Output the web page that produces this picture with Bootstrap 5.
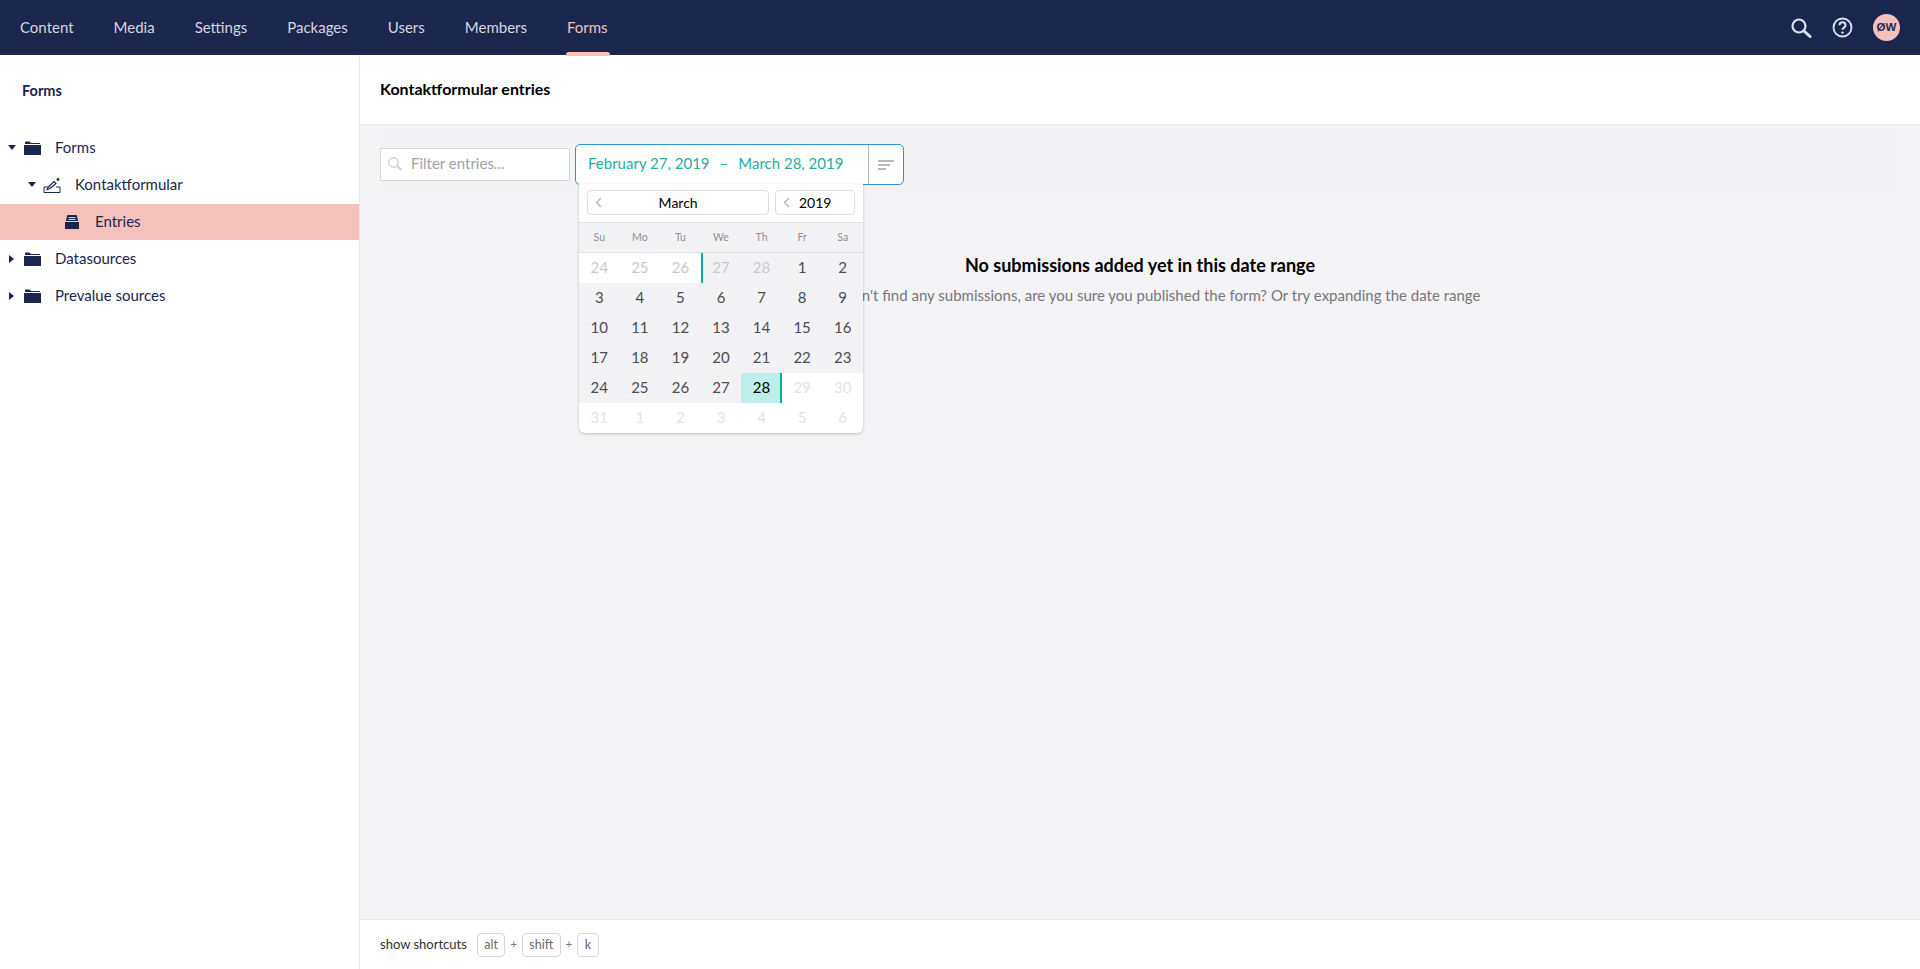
<!DOCTYPE html>
<html lang="en"><head><meta charset="utf-8"><title>Forms</title>
<link href="https://cdn.jsdelivr.net/npm/bootstrap@5.3.0/dist/css/bootstrap.min.css" rel="stylesheet">
<style>
html,body{height:100%}
body{font-family:Lato,"Liberation Sans",sans-serif;font-size:15px;color:#303033;background:#fff;overflow:hidden}
.app-top{height:55px;background:#1b264f}
.sec-link{display:block;position:relative;color:#d8d7d9;font-size:15px;line-height:53px;padding:0 20px;text-decoration:none}
.sec-link.on{color:#f5c1bc}
.sec-link.on::after{content:"";position:absolute;left:19px;right:18px;bottom:-2px;height:4px;background:#f5c1bc;border-radius:3px 3px 0 0}
.top-ico{color:#d8e4f0}
.avatar{width:27px;height:27px;border-radius:50%;background:#f5c1bc;color:#1b264f;font:600 11.5px/27px "Liberation Sans",sans-serif;text-align:center}
.app-main{height:914px}
.side{width:360px;flex:none;border-right:1px solid #e9e9eb;background:#fff}
.side-title{height:55px;padding:26px 0 0 22px;font-weight:700;font-size:14.5px;line-height:20px;color:#1b264f;margin-bottom:0}
.tree-row{height:37px;font-size:15px;color:#1b264f}
.tree-row.first{margin-top:19px}
.tree-row.sel{background:#f5c1bc;height:36px;margin-top:1px;padding-bottom:1px}
.caret-slot{width:14px;flex:none;display:flex;justify-content:center}
.tree-ico{width:18px;flex:none;margin:0 14px 0 4px;display:flex;justify-content:center}
.ind1{padding-left:5px}.ind2{padding-left:25px}.ind3{padding-left:45px}
.work{background:#f4f3f5;min-width:0}
.work-head{height:70px;background:#fff;border-bottom:1px solid #e9e9eb;padding:0 20px;font-size:16px;font-weight:700;color:#000;line-height:67px}
.tools{margin:0 20px;padding:20px 0 0;height:71px;background:#f3f3f5;position:relative}
.filter-box{width:190px;height:33px;margin-top:3px;background:#fff;border:1px solid #d8d7d9;color:#a2a1a6;font-size:15px;padding:0 6px 2px}
.range{width:330px;position:relative;margin-left:5px}
.range-bar{width:329px;height:41px;margin-top:-1px;background:#fff;border:1px solid #2b93d2;border-radius:5px;color:#1fae9f;font-size:15px}
.range-txt{flex:1;padding:0 0 3px 12px}
.range-dash{margin:0 10px}
.range-btn{width:35px;height:39px;border-left:1px solid #bbbabf}
.calendar{position:absolute;left:4px;top:39px;width:284px;background:#fff;border-radius:0 0 6px 6px;box-shadow:0 1px 3px rgba(0,0,0,.22);color:#303033;z-index:5}
.cal-head{height:38px;padding:6px 8px;gap:6px}
.pick{height:25px;border:1px solid #dededf;border-radius:4px;font-size:14px;color:#000;line-height:23px;text-align:center;position:relative}
.pick svg{position:absolute;left:7px;top:6px}
.pick-m{width:183px}.pick-y{width:80px}
.wk{display:grid;grid-template-columns:repeat(7,1fr)}
.wk-names{height:31px;background:#f3f3f5;border-top:1px solid #e0e0e2;border-bottom:1px solid #e0e0e2;font-size:10.5px;color:#8e8d92;text-align:center;line-height:29px}
.dcell{height:30px;text-align:center;line-height:28px;font-size:15px;color:#4c4c52;position:relative}
.dcell.past{color:#c9c9cc}
.dcell.far{color:#e3e3e5}
.dcell.range-in{background:#f3f3f5}
.dcell.end{background:#bdeeea;color:#000}
.dcell.mark-r::after{content:"";position:absolute;right:0;top:0;bottom:0;width:2px;background:#00b0a0}
.dcell.mark-l::after{content:"";position:absolute;left:0;top:0;bottom:0;width:2px;background:#00b0a0}
.empty-wrap{text-align:center;padding-top:57px}
.empty-h{font-size:18px;font-weight:700;color:#000;line-height:24px;margin-bottom:6px}
.empty-p{font-size:15px;color:#77767b;line-height:24px;margin:0}
.foot{height:50px;margin-top:0;background:#fff;border-top:1px solid #e9e9eb;padding-left:20px;font-size:13px;color:#303033}
.kbd-key{border:1px solid #d8d7d9;border-radius:4px;height:24px;line-height:22px;padding:0 6.5px;font-size:12.5px;color:#68676c}
.plus{font-size:11px;color:#77767b;margin:0 5px}
</style></head>
<body>
<nav class="app-top d-flex align-items-center justify-content-between">
  <div class="d-flex">
    <a class="sec-link" href="#">Content</a><a class="sec-link" href="#">Media</a><a class="sec-link" href="#">Settings</a><a class="sec-link" href="#">Packages</a><a class="sec-link" href="#">Users</a><a class="sec-link" href="#">Members</a><a class="sec-link on" href="#">Forms</a>
  </div>
  <div class="d-flex align-items-center top-ico" style="gap:20px;padding-right:20px">
    <svg width="22" height="22" viewBox="0 0 22 22" fill="none" stroke="currentColor"><circle cx="9" cy="9" r="6.5" stroke-width="2.2"/><path d="M14 14l6 5.5" stroke-width="3" stroke-linecap="round"/></svg>
    <svg width="21" height="21" viewBox="0 0 21 21" fill="none" stroke="currentColor"><circle cx="10.5" cy="10.5" r="9" stroke-width="1.9"/><path d="M7.5 8.2c0-4 6-4 6 0 0 2.4-3 2.4-3 4.6" stroke-width="2"/><circle cx="10.5" cy="15.6" r="1.2" fill="currentColor" stroke="none"/></svg>
    <div class="avatar">ØW</div>
  </div>
</nav>
<div class="d-flex app-main">
  <aside class="side">
    <h1 class="side-title">Forms</h1>
    <div class="tree-row first d-flex align-items-center ind1">
      <span class="caret-slot"><svg width="8" height="6"><path d="M0 0h8L4 5z" fill="#1b264f"/></svg></span>
      <span class="tree-ico"><svg width="17" height="14" viewBox="0 0 17 14"><path d="M1 3V1.5C1 1 1.4.5 2 .5h3.5L7 2h9v1z M0 4h17v10H0z" fill="#1b264f"/></svg></span>Forms
    </div>
    <div class="tree-row d-flex align-items-center ind2">
      <span class="caret-slot"><svg width="8" height="6"><path d="M0 0h8L4 5z" fill="#1b264f"/></svg></span>
      <span class="tree-ico"><svg width="18" height="16" viewBox="0 0 18 16" fill="none" stroke="#1b264f"><path d="M1 15.5V10h4M1 15.5h16V10h-4" stroke-width="1"/><path d="M5 10.5l6-6 2 2-6 5-3 1z" stroke-width="1.2"/><circle cx="15" cy="2.5" r="1.4" fill="#1b264f" stroke="none"/></svg></span>Kontaktformular
    </div>
    <div class="tree-row sel d-flex align-items-center ind3">
      <span class="caret-slot"></span>
      <span class="tree-ico"><svg width="14" height="14" viewBox="0 0 14 14"><path d="M0 7h14v7H0z M2 1C2 .5 2.500 0 3 0h8c.5 0 1 .5 1 1l1 5H1z" fill="#1b264f"/><path d="M3.500 2.500h7M3.500 4.500h7" stroke="#f5c1bc"/></svg></span>Entries
    </div>
    <div class="tree-row d-flex align-items-center ind1">
      <span class="caret-slot"><svg width="6" height="8"><path d="M0 0v8l5-4z" fill="#1b264f"/></svg></span>
      <span class="tree-ico"><svg width="17" height="14" viewBox="0 0 17 14"><path d="M1 3V1.5C1 1 1.4.5 2 .5h3.500L7 2h9v1z M0 4h17v10H0z" fill="#1b264f"/></svg></span>Datasources
    </div>
    <div class="tree-row d-flex align-items-center ind1">
      <span class="caret-slot"><svg width="6" height="8"><path d="M0 0v8l5-4z" fill="#1b264f"/></svg></span>
      <span class="tree-ico"><svg width="17" height="14" viewBox="0 0 17 14"><path d="M1 3V1.5C1 1 1.4.5 2 .5h3.500L7 2h9v1z M0 4h17v10H0z" fill="#1b264f"/></svg></span>Prevalue sources
    </div>
  </aside>
  <main class="work flex-grow-1 d-flex flex-column">
    <div class="work-head">Kontaktformular entries</div>
    <div class="tools d-flex align-items-start">
      <div class="filter-box d-flex align-items-center gap-2">
        <svg width="16" height="16" viewBox="0 0 16 16" fill="none" stroke="#d0d0d3"><circle cx="6.500" cy="6.500" r="4.700" stroke-width="1.500"/><path d="M10 10l4.500 4" stroke-width="2"/></svg>
        <span>Filter entries...</span>
      </div>
      <div class="range">
        <div class="range-bar d-flex align-items-center">
          <span class="range-txt">February 27, 2019<span class="range-dash">–</span>March 28, 2019</span>
          <span class="range-btn d-flex align-items-center justify-content-center"><svg width="16" height="10"><path d="M0 1h16M0 5h12M0 9h8" stroke="#a2a1a6" stroke-width="1.500"/></svg></span>
        </div>
        <div class="calendar">
          <div class="cal-head d-flex">
            <div class="pick pick-m"><svg width="7" height="11"><path d="M6 1L1.500 5.500 6 10" fill="none" stroke="#b5b5b8" stroke-width="1.300"/></svg>March</div>
            <div class="pick pick-y"><svg width="7" height="11"><path d="M6 1L1.500 5.500 6 10" fill="none" stroke="#b5b5b8" stroke-width="1.300"/></svg>2019</div>
          </div>
          <div class="wk wk-names"><span>Su</span><span>Mo</span><span>Tu</span><span>We</span><span>Th</span><span>Fr</span><span>Sa</span></div>
          <div class="wk" id="days"></div>
        </div>
      </div>
    </div>
    <div class="empty-wrap flex-grow-1">
      <h2 class="empty-h">No submissions added yet in this date range</h2>
      <p class="empty-p">We couldn't find any submissions, are you sure you published the form? Or try expanding the date range</p>
    </div>
    <footer class="foot d-flex align-items-center">
      <span style="margin-right:10px">show shortcuts</span>
      <span class="kbd-key">alt</span><span class="plus">+</span><span class="kbd-key">shift</span><span class="plus">+</span><span class="kbd-key">k</span>
    </footer>
  </main>
</div>
<script>
const d=[24,25,26,27,28,1,2,3,4,5,6,7,8,9,10,11,12,13,14,15,16,17,18,19,20,21,22,23,24,25,26,27,28,29,30,31,1,2,3,4,5,6];
let h='';
d.forEach((n,i)=>{let c='dcell';
 if(i<5)c+=' past';
 if(i>32)c+=' far';
 if(i>=3&&i<=32)c+=' range-in';
 if(i==32)c+=' end mark-r';
 if(i==3)c+=' mark-l';
 h+='<div class="'+c+'">'+n+'</div>';});
document.getElementById('days').innerHTML=h;
</script>
<script src="https://cdn.jsdelivr.net/npm/bootstrap@5.3.0/dist/js/bootstrap.bundle.min.js"></script>
</body></html>
